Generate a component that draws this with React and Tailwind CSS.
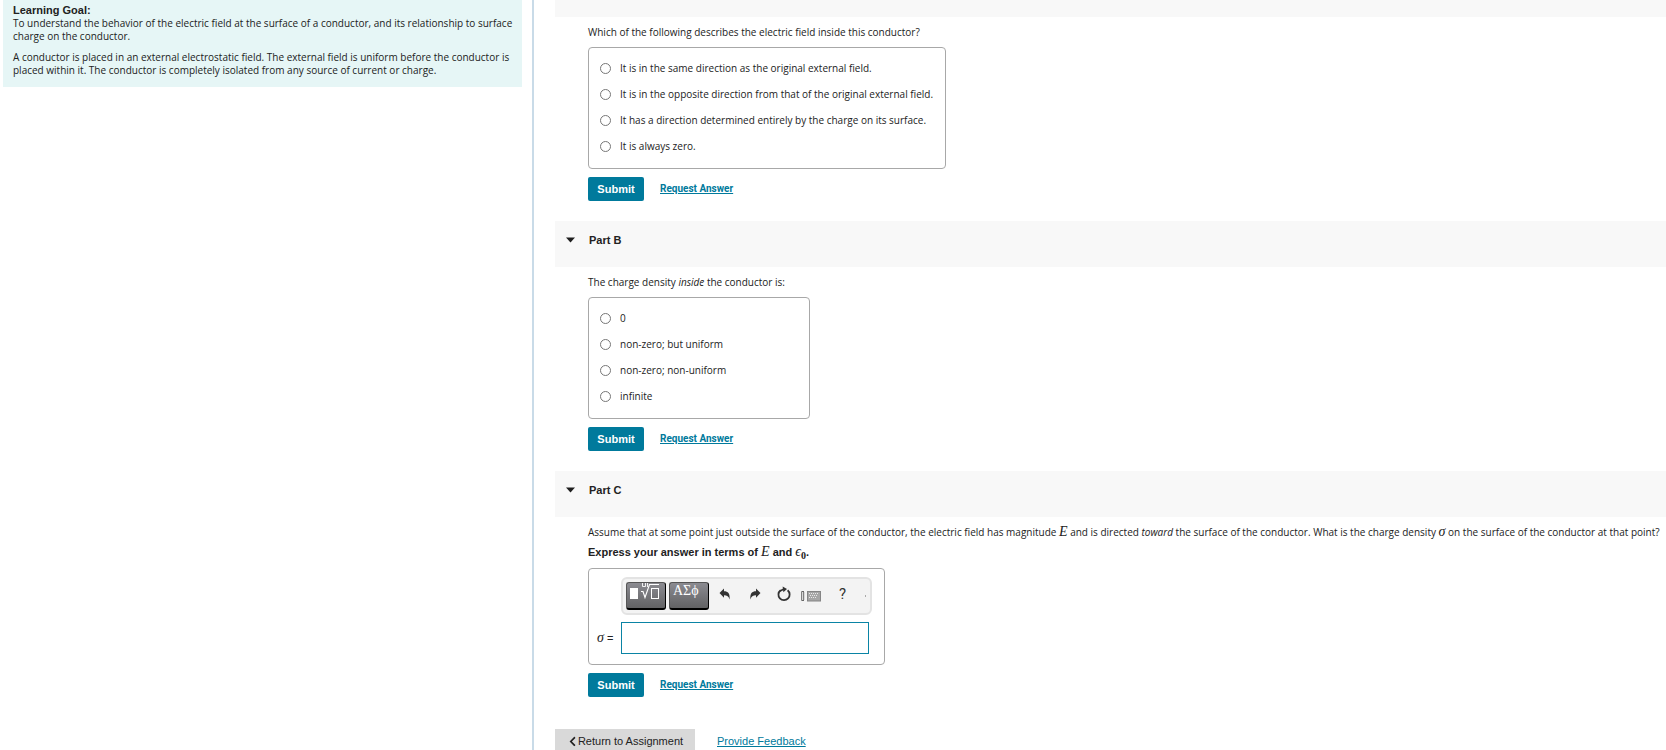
import { FaChevronLeft } from "react-icons/fa";

function MathVar({ children }) {
  return (
    <span className="font-['Liberation_Serif',serif] text-[14px] leading-[0] font-normal italic">
      {children}
    </span>
  );
}

function PartHeader({ title }) {
  return (
    <header className="h-[46px] bg-[#f8f8f8] pt-[11px] pl-[11px]">
      <button type="button" className="flex items-center gap-[14px] font-['Liberation_Sans',Arial,sans-serif] text-[11px] leading-4 font-bold">
        <svg width="9" height="6" viewBox="0 0 9 6" aria-hidden="true">
          <path d="M0 0.5H9L4.5 5.5Z" fill="#1f1f1f" />
        </svg>
        {title}
      </button>
    </header>
  );
}

function Actions() {
  return (
    <div className="mt-2 flex items-center gap-4">
      <button
        type="button"
        className="h-6 w-14 rounded-[2px] bg-[#007a9c] font-['Liberation_Sans',Arial,sans-serif] text-[11px] font-bold text-white"
      >
        Submit
      </button>
      <a href="#answer" className="font-[Roboto,Arial,sans-serif] text-[10px] leading-4 font-bold text-[#007a9c] underline">
        Request Answer
      </a>
    </div>
  );
}

function Choices({ name, options, className }) {
  return (
    <fieldset className={`mt-2 flex h-[122px] flex-col rounded-[4px] border border-[#a8a8a8] pt-[7px] pl-[11px] ${className}`}>
      {options.map((text, i) => (
        <label key={text} className="flex h-[26px] items-center gap-[9px]">
          <input
            type="radio"
            name={name}
            value={i}
            className="size-[11px] appearance-none rounded-full border border-[#777] bg-white checked:border-4 checked:border-[#007a9c]"
          />
          {text}
        </label>
      ))}
    </fieldset>
  );
}

function ToolIcons() {
  return (
    <>
      <button type="button" aria-label="Undo" className="mb-1 ml-[10px] flex">
        <svg width="12" height="12" viewBox="0 0 12 12" aria-hidden="true">
          <path d="M5 0.5V3.2C9 3.2 11.2 5.4 10.6 11.5C9.8 8.5 8 7.2 5 7.2V9.8L0.5 5Z" fill="#333" />
        </svg>
      </button>
      <button type="button" aria-label="Redo" className="mb-1 ml-[18px] flex">
        <svg width="12" height="12" viewBox="0 0 12 12" aria-hidden="true">
          <path d="M7 0.5V3.2C3 3.2 0.8 5.4 1.4 11.5C2.2 8.5 4 7.2 7 7.2V9.8L11.5 5Z" fill="#333" />
        </svg>
      </button>
      <button type="button" aria-label="Reset" className="mb-1 ml-4 flex">
        <svg width="14" height="16" viewBox="0 0 14 16" aria-hidden="true">
          <path d="M3.6 4.2A5.6 5.6 0 1 0 10.6 4.3" fill="none" stroke="#333" strokeWidth="1.8" />
          <path d="M3 5L7 3" stroke="#333" strokeWidth="1.8" />
          <path d="M5.6 0.4L10 3L6.4 6.2Z" fill="#333" />
        </svg>
      </button>
      <button type="button" aria-label="Keyboard shortcuts" className="ml-[10px] flex">
        <svg width="20" height="11" viewBox="0 0 20 11" aria-hidden="true">
          <path d="M3 0.5H0.7V9.5H3M2.7 1V9" fill="none" stroke="#666" />
          <rect x="6.5" y="0.5" width="13" height="9.5" fill="#a6a6a6" stroke="#858585" />
          <path d="M8 2.5H18M9 4.5H17M8 6.5H15" stroke="#e8e8e8" strokeDasharray="1 1" />
        </svg>
      </button>
      <button type="button" aria-label="Help" className="mb-1 ml-[18px] font-[Roboto,Arial,sans-serif] text-[15px] leading-4 text-[#333]">
        ?
      </button>
      <span className="mr-1 ml-auto h-[2px] w-px bg-[#aaa]" />
    </>
  );
}

function AnswerEditor() {
  const key =
    "flex h-7 w-10 rounded-[3px] border border-[#555] border-r-black border-b-2 border-b-black bg-linear-to-b from-[#8b8b91] to-[#626264] text-white";
  return (
    <div className="mt-[9px] h-[97px] w-[297px] rounded-[4px] border border-[#a8a8a8] pt-2 pl-2">
      <div className="ml-6 flex h-[38px] w-[251px] items-center rounded-[6px] border-2 border-[#e3e3e3] bg-[#f3f3f3] pl-[3px]">
        <button type="button" aria-label="Templates" className={key}>
          <svg width="36" height="20" viewBox="0 0 36 20" aria-hidden="true">
            <rect x="3" y="5" width="8" height="11" fill="#fff" />
            <path d="M14 8.5H16L18 14.5L22.5 1.5H32" fill="none" stroke="#fff" strokeWidth="1.1" />
            <path d="M15.5 0V3.5H18.5V0M20.5 0V4" fill="none" stroke="#fff" strokeWidth="0.9" />
            <rect x="24.5" y="5.5" width="7" height="10" fill="none" stroke="#fff" />
          </svg>
        </button>
        <button
          type="button"
          className={`${key} ml-[3px] pl-[3px] font-['Liberation_Serif',serif] text-[14px] leading-4`}
        >
          ΑΣϕ
        </button>
        <ToolIcons />
      </div>
      <div className="mt-[7px] flex items-center">
        <label htmlFor="sigma" className="w-6 font-['Liberation_Sans',Arial,sans-serif] text-[11px] leading-[13px] whitespace-nowrap">
          <MathVar>σ</MathVar> =
        </label>
        <input id="sigma" type="text" className="h-8 w-[248px] border border-[#0a84a5] bg-white px-2 outline-none" />
      </div>
    </div>
  );
}

export default function App() {
  return (
    <div className="flex h-screen overflow-hidden bg-white font-['Open_Sans',Arial,sans-serif] text-[10px] leading-[13px] text-[#222]">
      <aside className="w-[534px] shrink-0 border-r-2 border-[#c9dbe8] pr-[10px] pl-[3px]">
        <div className="bg-[#e6f6f6] pt-1 pr-1 pb-[10px] pl-[10px]">
          <h2 className="font-['Liberation_Sans',Arial,sans-serif] text-[11px] leading-[13px] font-bold">Learning Goal:</h2>
          <p>
            To understand the behavior of the electric field at the surface of a conductor, and its
            relationship to surface charge on the conductor.
          </p>
          <p className="mt-2">
            A conductor is placed in an external electrostatic field. The external field is uniform
            before the conductor is placed within it. The conductor is completely isolated from any
            source of current or charge.
          </p>
        </div>
      </aside>
      <main className="min-w-0 flex-1 pl-[21px]">
        <section>
          <div className="h-[17px] bg-[#f8f8f8]" />
          <div className="pt-[9px] pb-5 pl-[33px]">
            <p>Which of the following describes the electric field inside this conductor?</p>
            <Choices
              name="part-a"
              className="w-[358px]"
              options={[
                "It is in the same direction as the original external field.",
                "It is in the opposite direction from that of the original external field.",
                "It has a direction determined entirely by the charge on its surface.",
                "It is always zero.",
              ]}
            />
            <Actions />
          </div>
        </section>
        <section>
          <PartHeader title="Part B" />
          <div className="pt-[9px] pb-5 pl-[33px]">
            <p>
              The charge density <i>inside</i> the conductor is:
            </p>
            <Choices
              name="part-b"
              className="w-[222px]"
              options={["0", "non-zero; but uniform", "non-zero; non-uniform", "infinite"]}
            />
            <Actions />
          </div>
        </section>
        <section>
          <PartHeader title="Part C" />
          <div className="pt-[9px] pl-[33px]">
            <p className="whitespace-nowrap">
              Assume that at some point just outside the surface of the conductor, the electric
              field has magnitude <MathVar>E</MathVar> and is directed <i>toward</i> the surface of
              the conductor. What is the charge density <MathVar>σ</MathVar> on the surface of the
              conductor at that point?
            </p>
            <p className="mt-[7px] font-['Liberation_Sans',Arial,sans-serif] text-[11px] leading-[13px] font-bold">
              Express your answer in terms of <MathVar>E</MathVar> and <MathVar>ϵ</MathVar>
              <sub className="font-['Liberation_Serif',serif] text-[10px] leading-[0]">0</sub>.
            </p>
            <AnswerEditor />
            <Actions />
          </div>
        </section>
        <footer className="mt-8 flex items-start gap-[22px] font-['Liberation_Sans',Arial,sans-serif] text-[11px] leading-4">
          <button type="button" className="flex h-6 w-[140px] items-center justify-center bg-[#d9d9d9]">
            <FaChevronLeft className="size-[11px]" aria-hidden="true" />
            Return to Assignment
          </button>
          <a href="#feedback" className="mt-1 text-[#007a9c] underline">
            Provide Feedback
          </a>
        </footer>
      </main>
    </div>
  );
}
